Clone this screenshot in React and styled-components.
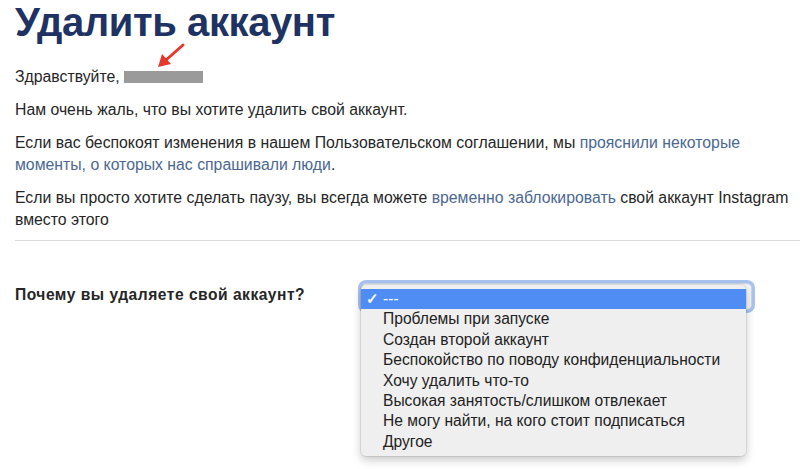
import React from "react";
import styled, { createGlobalStyle } from "styled-components";

const GlobalStyle = createGlobalStyle`
  html, body {
    margin: 0;
    padding: 0;
    background: #ffffff;
  }
  body {
    font-family: "Liberation Sans", Arial, sans-serif;
    color: #262626;
  }
`;

const StPage = styled.div`
  position: relative;
  padding: 0 0 0 15px;
  width: 785px;
  min-height: 469px;
`;

const StTitle = styled.h1`
  margin: 2px 0 0 0;
  font-size: 40px;
  line-height: 40px;
  font-weight: bold;
  color: #1e3263;
  letter-spacing: -0.4px;
`;

const StText = styled.p`
  margin: ${(p) => p.$top || 11}px 0 0 0;
  font-size: 15.8px;
  line-height: 22px;
`;

const StLink = styled.a`
  color: #4b6890;
  text-decoration: none;
`;

const StHidden = styled.span`
  display: inline-block;
  width: 79px;
  height: 12px;
  background: #9a9a9a;
  vertical-align: -1px;
`;

const StArrow = styled.svg`
  position: absolute;
  left: 150px;
  top: 38px;
  overflow: visible;
`;

const StRule = styled.hr`
  margin: 9px 0 0 0;
  border: 0;
  border-top: 1px solid #dcdcdc;
`;

const StRow = styled.div`
  display: flex;
  align-items: flex-start;
  margin-top: 42px;
`;

const StLabel = styled.label`
  width: 346px;
  font-size: 15.6px;
  font-weight: bold;
  line-height: 22px;
  letter-spacing: 0.5px;
  margin-top: 1px;
`;

const StSelect = styled.div`
  position: relative;
  width: 389px;
  height: 25px;
  border-radius: 5px;
  background: #f4f4f4;
  border: 1px solid #c9d3e6;
  box-shadow: 0 0 0 3px #a9c3ee;
`;

const StMenu = styled.ul`
  position: absolute;
  left: -1px;
  top: 1px;
  width: 385px;
  margin: 0;
  padding: 4px 0 4px 0;
  list-style: none;
  background: #efefef;
  border-radius: 5px;
  box-shadow: 0 0 0 1px rgba(0, 0, 0, 0.08), 0 4px 10px rgba(0, 0, 0, 0.22);
`;

const StItem = styled.li`
  position: relative;
  height: 20.4px;
  line-height: 20.4px;
  padding-left: 22px;
  font-size: 15.6px;
  color: ${(p) => (p.$active ? "#ffffff" : "#222222")};
  background: ${(p) => (p.$active ? "#4f8df4" : "transparent")};
`;

const StCheck = styled.span`
  position: absolute;
  left: 5px;
  top: 0;
  font-size: 15px;
  font-weight: bold;
`;

const reasons = [
  "---",
  "Проблемы при запуске",
  "Создан второй аккаунт",
  "Беспокойство по поводу конфиденциальности",
  "Хочу удалить что-то",
  "Высокая занятость/слишком отвлекает",
  "Не могу найти, на кого стоит подписаться",
  "Другое",
];

const App = () => {
  return (
    <>
      <GlobalStyle />
      <StPage>
        <StTitle>Удалить аккаунт</StTitle>
        <StText $top={24}>
          Здравствуйте, <StHidden />
        </StText>
        <StText>Нам очень жаль, что вы хотите удалить свой аккаунт.</StText>
        <StText>
          Если вас беспокоят изменения в нашем Пользовательском соглашении, мы{" "}
          <StLink href="#">прояснили некоторые моменты, о которых нас спрашивали люди</StLink>.
        </StText>
        <StText>
          Если вы просто хотите сделать паузу, вы всегда можете{" "}
          <StLink href="#">временно заблокировать</StLink> свой аккаунт Instagram вместо этого
        </StText>
        <StRule />
        <StRow>
          <StLabel>Почему вы удаляете свой аккаунт?</StLabel>
          <StSelect>
            <StMenu>
              {reasons.map((r, i) => (
                <StItem key={r} $active={i === 0}>
                  {i === 0 && <StCheck>✓</StCheck>}
                  {r}
                </StItem>
              ))}
            </StMenu>
          </StSelect>
        </StRow>
        {/* красная стрелка поверх текста */}
        <StArrow width="40" height="30" viewBox="0 0 40 30">
          <line x1="33" y1="5" x2="16" y2="20" stroke="#e5392b" strokeWidth="3" strokeLinecap="round" />
          <polygon points="8,27 12,14 21,24" fill="#e5392b" />
        </StArrow>
      </StPage>
    </>
  );
};

export default App;
